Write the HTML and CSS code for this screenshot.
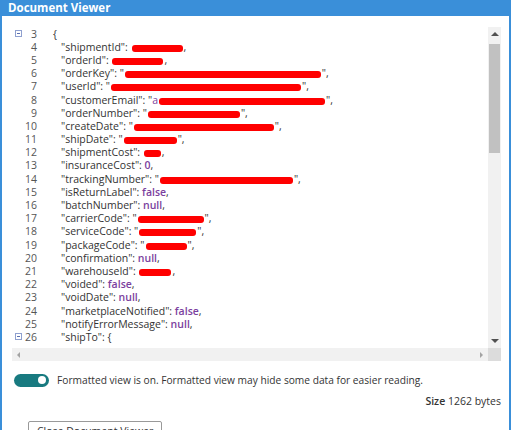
FILE: index.html
```html
<!DOCTYPE html>
<html lang="en">

<head>
    <meta charset="UTF-8">
    <title>Document Viewer</title>
    <link rel="stylesheet" href="styles.css">
</head>

<body>
    <div class="dialog">
        <div class="dialog-header">Document Viewer</div>

        <div class="dialog-body">
            <div class="code-box">
                <div class="code-view">
                    <div class="line"><svg class="fold" viewBox="0 0 7 7"><rect x="0.5" y="0.5" width="6" height="6" fill="#fff" stroke="#8fa0cf"/><path d="M2 3.5h3" stroke="#5a6fb0"/></svg><span class="num">3</span><span class="code">{</span></div>
                    <div class="line"><span class="fold"></span><span class="num">4</span><span class="code in">"shipmentId": <span class="redact" style="width:51px"></span>,</span></div>
                    <div class="line"><span class="fold"></span><span class="num">5</span><span class="code in">"orderId": <span class="redact" style="width:51px"></span>,</span></div>
                    <div class="line"><span class="fold"></span><span class="num">6</span><span class="code in">"orderKey": "<span class="redact" style="width:196px"></span>",</span></div>
                    <div class="line"><span class="fold"></span><span class="num">7</span><span class="code in">"userId": "<span class="redact" style="width:190px"></span>",</span></div>
                    <div class="line"><span class="fold"></span><span class="num">8</span><span class="code in">"customerEmail": "<span class="str">a</span><span class="redact" style="width:166px"></span>",</span></div>
                    <div class="line"><span class="fold"></span><span class="num">9</span><span class="code in">"orderNumber": "<span class="redact" style="width:92px"></span>",</span></div>
                    <div class="line"><span class="fold"></span><span class="num">10</span><span class="code in">"createDate": "<span class="redact" style="width:140px"></span>",</span></div>
                    <div class="line"><span class="fold"></span><span class="num">11</span><span class="code in">"shipDate": "<span class="redact" style="width:53px"></span>",</span></div>
                    <div class="line"><span class="fold"></span><span class="num">12</span><span class="code in">"shipmentCost": <span class="redact" style="width:17px"></span>,</span></div>
                    <div class="line"><span class="fold"></span><span class="num">13</span><span class="code in">"insuranceCost": <span class="lit">0</span>,</span></div>
                    <div class="line"><span class="fold"></span><span class="num">14</span><span class="code in">"trackingNumber": "<span class="redact" style="width:133px"></span>",</span></div>
                    <div class="line"><span class="fold"></span><span class="num">15</span><span class="code in">"isReturnLabel": <span class="lit">false</span>,</span></div>
                    <div class="line"><span class="fold"></span><span class="num">16</span><span class="code in">"batchNumber": <span class="lit">null</span>,</span></div>
                    <div class="line"><span class="fold"></span><span class="num">17</span><span class="code in">"carrierCode": "<span class="redact" style="width:66px"></span>",</span></div>
                    <div class="line"><span class="fold"></span><span class="num">18</span><span class="code in">"serviceCode": "<span class="redact" style="width:57px"></span>",</span></div>
                    <div class="line"><span class="fold"></span><span class="num">19</span><span class="code in">"packageCode": "<span class="redact" style="width:41px"></span>",</span></div>
                    <div class="line"><span class="fold"></span><span class="num">20</span><span class="code in">"confirmation": <span class="lit">null</span>,</span></div>
                    <div class="line"><span class="fold"></span><span class="num">21</span><span class="code in">"warehouseId": <span class="redact" style="width:32px"></span>,</span></div>
                    <div class="line"><span class="fold"></span><span class="num">22</span><span class="code in">"voided": <span class="lit">false</span>,</span></div>
                    <div class="line"><span class="fold"></span><span class="num">23</span><span class="code in">"voidDate": <span class="lit">null</span>,</span></div>
                    <div class="line"><span class="fold"></span><span class="num">24</span><span class="code in">"marketplaceNotified": <span class="lit">false</span>,</span></div>
                    <div class="line"><span class="fold"></span><span class="num">25</span><span class="code in">"notifyErrorMessage": <span class="lit">null</span>,</span></div>
                    <div class="line"><svg class="fold" viewBox="0 0 7 7"><rect x="0.5" y="0.5" width="6" height="6" fill="#fff" stroke="#8fa0cf"/><path d="M2 3.5h3" stroke="#5a6fb0"/></svg><span class="num">26</span><span class="code in">"shipTo": {</span></div>
                </div>

                <div class="vscroll">
                    <span class="arrow-up"></span>
                    <div class="vtrack"><div class="vthumb"></div></div>
                    <span class="arrow-down"></span>
                </div>

                <div class="hscroll">
                    <span class="arrow-left"></span>
                    <span class="arrow-right"></span>
                </div>
                <div class="corner"></div>
            </div>

            <div class="toggle-row">
                <span class="toggle"><span class="knob"></span></span>
                <span>Formatted view is on. Formatted view may hide some data for easier reading.</span>
            </div>

            <div class="size-row"><b>Size</b> 1262 bytes</div>

            <button class="close-button">Close Document Viewer</button>
        </div>
    </div>
</body>

</html>
```

FILE: styles.css
```css
body {
    margin: 0;
    font-family: "Open Sans", "Liberation Sans", sans-serif;
    background-color: #fff;
    color: #333;
}

.dialog {
    width: 507px;
    height: 430px;
    border: 2px solid #3a8fd9;
    border-top: none;
    border-bottom: none;
    overflow: hidden;
}

.dialog-header {
    height: 16px;
    line-height: 15px;
    padding-left: 6px;
    background-color: #3a8fd9;
    color: #fff;
    font-size: 11.5px;
    font-weight: bold;
}

.dialog-body {
    padding: 11px 6px 0 10px;
}

.code-box {
    display: grid;
    grid-template-columns: 476px 13px;
    grid-template-rows: 321px 13px;
    width: 489px;
}

.code-view {
    overflow: hidden;
    font-size: 10.5px;
    white-space: nowrap;
}

.line {
    display: flex;
    align-items: center;
    height: 13.2px;
}

.fold {
    display: block;
    width: 7px;
    height: 7px;
    margin-left: 3px;
    flex: none;
}

.num {
    width: 15px;
    flex: none;
    text-align: right;
    color: #555;
}

.code {
    padding-left: 16px;
    color: #333;
}

.code.in {
    padding-left: 24px;
}

.str {
    color: #7b3f9e;
}

.lit {
    color: #7b3f9e;
    font-weight: 600;
}

.redact {
    display: inline-block;
    height: 7px;
    margin: 0 1px;
    vertical-align: -1px;
    background-color: #ff0000;
    border-radius: 3px;
}

.vscroll {
    display: flex;
    flex-direction: column;
    align-items: center;
    background-color: #f1f1f1;
}

.vtrack {
    flex: 1;
    width: 100%;
    padding-top: 8px;
}

.vthumb {
    width: 11px;
    height: 109px;
    margin: 0 auto;
    background-color: #c1c1c1;
}

.arrow-up,
.arrow-down {
    width: 0;
    height: 0;
    margin-top: 5px;
    border-left: 4px solid transparent;
    border-right: 4px solid transparent;
}

.arrow-up {
    border-bottom: 4px solid #505050;
}

.arrow-down {
    margin: 0 0 5px;
    border-top: 4px solid #505050;
}

.hscroll {
    display: flex;
    justify-content: space-between;
    align-items: center;
    padding: 0 5px;
    background-color: #f1f1f1;
}

.arrow-left,
.arrow-right {
    width: 0;
    height: 0;
    border-top: 3px solid transparent;
    border-bottom: 3px solid transparent;
}

.arrow-left {
    border-right: 3px solid #a3a3a3;
}

.arrow-right {
    border-left: 3px solid #a3a3a3;
}

.corner {
    background-color: #dcdcdc;
}

.toggle-row {
    display: flex;
    align-items: center;
    gap: 8px;
    margin-top: 12px;
    padding-left: 2px;
    font-size: 10.2px;
    color: #333;
}

.toggle {
    display: flex;
    justify-content: flex-end;
    align-items: center;
    box-sizing: border-box;
    width: 35px;
    height: 13px;
    padding-right: 3px;
    background-color: #187a80;
    border-radius: 7px;
}

.knob {
    width: 8px;
    height: 8px;
    background-color: #fff;
    border-radius: 50%;
}

.size-row {
    margin-top: 7px;
    padding-right: 2px;
    text-align: right;
    font-size: 10.5px;
    color: #333;
}

.size-row b {
    font-weight: 600;
}

.close-button {
    margin: 13px 0 0 16px;
    padding: 2px 8px;
    font-family: inherit;
    font-size: 10.5px;
    color: #333;
    background-color: #fff;
    border: 1px solid #999;
    border-radius: 2px;
}
```
